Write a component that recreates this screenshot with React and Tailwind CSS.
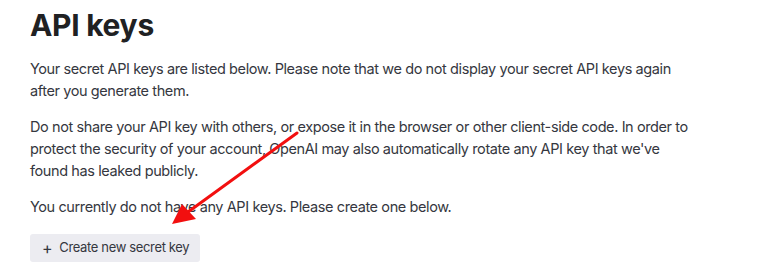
export default function App() {
  return (
    <div className="relative w-[768px] h-[279px] bg-white overflow-hidden" style={{ fontFamily: 'Inter, "Noto Sans", sans-serif' }}>
      <div className="pl-[30px] pt-[5px]">
        <h1 className="text-[30px] leading-[40px] font-bold text-[#202123] tracking-[-0.3px]">API keys</h1>
        <div className="mt-[13px] text-[14.5px] leading-[22px] text-[#353740] tracking-[-0.4px] whitespace-nowrap space-y-[14px]">
          <p>
            Your secret API keys are listed below. Please note that we do not display your secret API keys again
            <br />
            after you generate them.
          </p>
          <p>
            Do not share your API key with others, or expose it in the browser or other client-side code. In order to
            <br />
            protect the security of your account, OpenAI may also automatically rotate any API key that we've
            <br />
            found has leaked publicly.
          </p>
          <p>You currently do not have any API keys. Please create one below.</p>
        </div>
        <button
          type="button"
          className="mt-[16px] h-[28px] pl-[12px] pr-[11px] flex items-center gap-[7px] rounded-[3px] bg-[#ececf1] text-[13px] tracking-[-0.35px] text-[#353740]"
        >
          <span className="text-[16px] leading-none">+</span>
          Create new secret key
        </button>
      </div>
      <svg className="absolute left-0 top-0 pointer-events-none" width="768" height="279">
        <line x1="297" y1="133" x2="188" y2="212" stroke="#f20f0f" strokeWidth="3" strokeLinecap="round" />
        <polygon points="172,224 182,204 196,219" fill="#f20f0f" />
      </svg>
    </div>
  );
}
